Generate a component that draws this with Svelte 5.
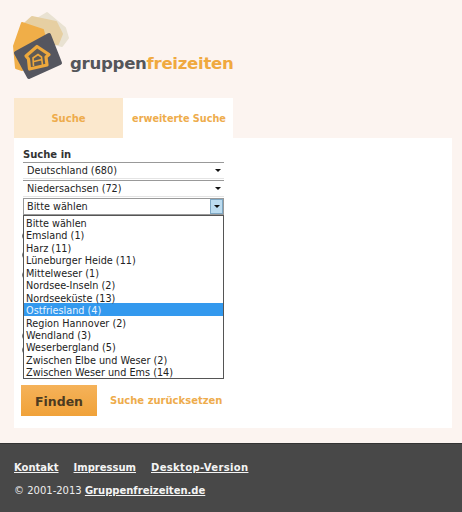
<script>
  const states = ['Deutschland (680)', 'Niedersachsen (72)'];
  const regions = [
    'Bitte wählen',
    'Emsland (1)',
    'Harz (11)',
    'Lüneburger Heide (11)',
    'Mittelweser (1)',
    'Nordsee-Inseln (2)',
    'Nordseeküste (13)',
    'Ostfriesland (4)',
    'Region Hannover (2)',
    'Wendland (3)',
    'Weserbergland (5)',
    'Zwischen Elbe und Weser (2)',
    'Zwischen Weser und Ems (14)'
  ];
  const selected = 'Ostfriesland (4)';
  const hiddenRows = [233, 252, 272, 333, 347];
</script>

<div class="page">
  <header class="logo">
    <svg class="mark" width="70" height="85" viewBox="0 0 70 85">
      <path d="M47 13 L65 28 L68 38 L62 46 L40 40 L32 22 Z" fill="#e9e2d2" stroke="#e9e2d2" stroke-width="2" stroke-linejoin="round" />
      <path d="M32 17 L56 22 L62 34 L58 44 L30 44 L22 26 Z" fill="#e6cfa2" stroke="#e6cfa2" stroke-width="2" stroke-linejoin="round" />
      <path d="M22 23 L43 30 L46 42 L22 70 L16 68 L14 46 Z" fill="#f0ae48" stroke="#f0ae48" stroke-width="2" stroke-linejoin="round" />
      <path d="M16 53 L49 35 L60 63 L29 77 Z" fill="#55565f" stroke="#55565f" stroke-width="4" stroke-linejoin="round" />
      <path d="M26 56 L37 46.5 L49 54.5 L46 57 L47 65 L29.5 69 L28.5 59 Z" fill="#5e5a55" stroke="#eda83c" stroke-width="3.2" stroke-linejoin="round" />
      <path d="M33.5 66 L33 58 L38 54.5 L41.5 57 L42.5 65 M34 61.5 L42 59.5" fill="none" stroke="#eda83c" stroke-width="1.6" />
    </svg>
    <div class="wordmark"><span class="dark">gruppen</span><span class="orange">freizeiten</span></div>
  </header>

  <nav class="tabs">
    <a class="tab inactive" href="#s">Suche</a>
    <a class="tab active" href="#e">erweiterte Suche</a>
  </nav>

  <main class="panel">
    <div class="heading">Suche in</div>
    <div class="fields">
      {#each states as s}
        <div class="select">
          <span>{s}</span>
          <i class="arrow"></i>
        </div>
      {/each}
      <div class="select open">
        <span>Bitte wählen</span>
        <b class="spin"><i class="arrow"></i></b>
        <ul class="list">
          {#each regions as r}
            <li class:sel={r === selected}>{r}</li>
          {/each}
        </ul>
      </div>
    </div>

    <div class="covered">
      {#each hiddenRows as y}
        <span class="stub" style="top: {y - 215}px"></span>
      {/each}
    </div>

    <div class="actions">
      <button class="find">Finden</button>
      <a class="reset" href="#r">Suche zurücksetzen</a>
    </div>
  </main>

  <footer class="foot">
    <div class="links">
      <a href="#k">Kontakt</a>
      <a href="#i">Impressum</a>
      <a class="wide" href="#d">Desktop-Version</a>
    </div>
    <div class="copy">© 2001-2013 <a href="#g">Gruppenfreizeiten.de</a></div>
  </footer>
</div>

<style>
  :global(body) {
    margin: 0;
    background: #fcf4f0;
  }

  .page {
    width: 462px;
    height: 512px;
    overflow: hidden;
    display: flex;
    flex-direction: column;
    font-family: "DejaVu Sans", sans-serif;
    font-size: 10px;
    background: #fcf4f0;
  }

  .logo {
    height: 98px;
    display: flex;
    align-items: flex-start;
  }

  .mark {
    flex: none;
  }

  .wordmark {
    margin-top: 52px;
    font-size: 16.6px;
    font-weight: bold;
    line-height: 24px;
    letter-spacing: -0.3px;
  }

  .dark {
    color: #55565a;
  }

  .orange {
    color: #f0a93e;
  }

  .tabs {
    display: flex;
    height: 40px;
    margin-left: 14px;
  }

  .tab {
    width: 110px;
    display: flex;
    align-items: center;
    justify-content: center;
    color: #eeac4c;
    font-size: 10px;
    font-weight: bold;
    text-decoration: none;
  }

  .inactive {
    width: 109px;
    background: #fbe8cd;
  }

  .active {
    background: #fff;
    font-size: 9.7px;
    padding-left: 2px;
    box-sizing: border-box;
  }

  .panel {
    margin: 0 10px 0 14px;
    height: 290px;
    box-sizing: border-box;
    background: #fff;
    padding: 10px 8px 0;
    display: flex;
    flex-direction: column;
  }

  .heading {
    font-weight: bold;
    color: #333;
    font-size: 10px;
    line-height: 13px;
    margin-left: 1px;
  }

  .fields {
    display: flex;
    flex-direction: column;
    gap: 1px;
    margin-top: 1px;
    margin-left: 1px;
    width: 201px;
    font-size: 9.7px;
  }

  .select {
    position: relative;
    height: 17px;
    border-top: 1px solid #999;
    border-bottom: 1px solid #e4e4e4;
    box-sizing: border-box;
    display: flex;
    align-items: center;
    justify-content: space-between;
    padding-left: 4px;
    color: #222;
    line-height: 15px;
  }

  .arrow {
    width: 0;
    height: 0;
    margin-right: 3px;
    border: 3px solid transparent;
    border-top: 3px solid #111;
    border-bottom: 0;
  }

  .open {
    height: 17px;
    border: 1px solid #999;
    padding-left: 3px;
    background: #fff;
  }

  .spin {
    width: 13px;
    height: 15px;
    background: #bcdcf0;
    border: 1px solid #7fa8c4;
    box-sizing: border-box;
    display: flex;
    align-items: center;
    justify-content: center;
  }

  .spin .arrow {
    margin: 0;
  }

  .list {
    position: absolute;
    z-index: 2;
    left: -1px;
    top: 16px;
    width: 201px;
    box-sizing: border-box;
    margin: 0;
    padding: 0;
    list-style: none;
    background: #fff;
    border: 1px solid #555;
  }

  .list li {
    height: 12.45px;
    line-height: 15px;
    padding-left: 2px;
    color: #222;
    white-space: nowrap;
  }

  .list li.sel {
    background: #3399ee;
    color: #e8f4ff;
  }

  .covered {
    position: relative;
    height: 170px;
  }

  .stub {
    position: absolute;
    left: 0;
    width: 4px;
    height: 6px;
    border: 1px solid #777;
    border-right: 0;
    border-radius: 3px 0 0 3px;
    box-sizing: border-box;
  }

  .actions {
    display: flex;
    align-items: center;
    gap: 13px;
    margin-left: -1px;
  }

  .find {
    width: 76px;
    height: 31px;
    border: 0;
    padding: 1px 0 0;
    background: linear-gradient(#f5b25a, #f0a239);
    color: #4c3a20;
    font-family: inherit;
    font-size: 12.5px;
    font-weight: bold;
  }

  .reset {
    color: #eeac4c;
    font-size: 10px;
    font-weight: bold;
    text-decoration: none;
  }

  .foot {
    margin-top: 15px;
    flex: 1;
    background: #484848;
    border-top: 1px solid #333;
    padding: 17px 14px 0;
    color: #eee;
    font-size: 10px;
  }

  .foot a {
    color: #f4f4f4;
    font-weight: bold;
  }

  .links {
    display: flex;
    gap: 15px;
    line-height: 13px;
  }

  .links .wide {
    letter-spacing: 0.35px;
  }

  .copy {
    margin-top: 10px;
    line-height: 13px;
  }
</style>
